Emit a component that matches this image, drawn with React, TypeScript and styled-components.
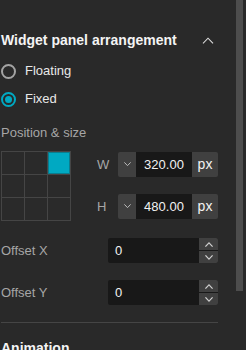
import styled, { createGlobalStyle } from "styled-components";

const GlobalStyle = createGlobalStyle`
  html, body {
    margin: 0;
    padding: 0;
    background: #292929;
  }
  * {
    box-sizing: border-box;
  }
`;

function Chevron({ up, size = 8, color = "#c8c8c8", weight = 1.4 }: { up?: boolean; size?: number; color?: string; weight?: number }) {
  return (
    <svg width={size} height={size / 2 + 1} viewBox="0 0 10 6" fill="none">
      <path
        d={up ? "M1 5.2 L5 1 L9 5.2" : "M1 0.8 L5 5 L9 0.8"}
        stroke={color}
        strokeWidth={weight}
        strokeLinecap="square"
      />
    </svg>
  );
}

const cells = [0, 1, 2, 3, 4, 5, 6, 7, 8];

function App() {
  return (
    <>
      <GlobalStyle />
      <Page>
        <Main>
          <TopRule />
          <Content>
            <Header>
              <Title>Widget panel arrangement</Title>
              <Chevron up size={12} color="#e0e0e0" weight={0.9} />
            </Header>

            <RadioList>
              <RadioRow>
                <Radio />
                <RadioLabel>Floating</RadioLabel>
              </RadioRow>
              <RadioRow>
                <Radio checked />
                <RadioLabel>Fixed</RadioLabel>
              </RadioRow>
            </RadioList>

            <SubLabel>Position &amp; size</SubLabel>

            <PositionRow>
              <AnchorGrid>
                {cells.map((i) => (
                  <Cell key={i} active={i === 2} />
                ))}
              </AnchorGrid>
              <SizeColumn>
                <SizeRow>
                  <AxisLabel>W</AxisLabel>
                  <UnitSelect>
                    <Chevron size={7} color="#bdbdbd" />
                  </UnitSelect>
                  <SizeInput>320.00</SizeInput>
                  <UnitTag>px</UnitTag>
                </SizeRow>
                <SizeRow>
                  <AxisLabel>H</AxisLabel>
                  <UnitSelect>
                    <Chevron size={7} color="#bdbdbd" />
                  </UnitSelect>
                  <SizeInput>480.00</SizeInput>
                  <UnitTag>px</UnitTag>
                </SizeRow>
              </SizeColumn>
            </PositionRow>

            <OffsetRow>
              <SubLabel>Offset X</SubLabel>
              <NumberBox>
                <NumberValue>0</NumberValue>
                <Spinner>
                  <SpinButton>
                    <Chevron up size={8} color="#cfcfcf" />
                  </SpinButton>
                  <SpinButton>
                    <Chevron size={8} color="#cfcfcf" />
                  </SpinButton>
                </Spinner>
              </NumberBox>
            </OffsetRow>

            <OffsetRow>
              <SubLabel>Offset Y</SubLabel>
              <NumberBox>
                <NumberValue>0</NumberValue>
                <Spinner>
                  <SpinButton>
                    <Chevron up size={8} color="#cfcfcf" />
                  </SpinButton>
                  <SpinButton>
                    <Chevron size={8} color="#cfcfcf" />
                  </SpinButton>
                </Spinner>
              </NumberBox>
            </OffsetRow>

            <SectionRule />
            <Title>Animation</Title>
          </Content>
        </Main>
        <ScrollTrack>
          <ScrollThumb />
        </ScrollTrack>
      </Page>
    </>
  );
}

export default App;

const Page = styled.div`
  width: 246px;
  height: 350px;
  display: flex;
  overflow: hidden;
  background: #292929;
  font-family: "Liberation Sans", Arial, sans-serif;
  font-size: 13px;
  color: #e6e6e6;
`;

const Main = styled.div`
  flex: 1;
  display: flex;
  flex-direction: column;
`;

const TopRule = styled.div`
  margin-top: 11px;
  height: 1px;
  background: #5f5f5f;
`;

const Content = styled.div`
  display: flex;
  flex-direction: column;
  padding: 0 17px 0 1px;
`;

const Header = styled.div`
  margin-top: 19px;
  height: 20px;
  display: flex;
  align-items: center;
  justify-content: space-between;
  padding-right: 4px;
`;

const Title = styled.div`
  font-size: 14px;
  font-weight: 700;
  color: #f4f4f4;
  line-height: 20px;
`;

const RadioList = styled.div`
  margin-top: 7px;
  display: flex;
  flex-direction: column;
`;

const RadioRow = styled.div`
  height: 28px;
  display: flex;
  align-items: center;
  gap: 9px;
`;

const Radio = styled.span<{ checked?: boolean }>`
  width: 15px;
  height: 15px;
  border-radius: 50%;
  border: 2px solid ${(p) => (p.checked ? "#00a9c2" : "#a3a3a3")};
  display: flex;
  align-items: center;
  justify-content: center;
  &::after {
    content: "";
    width: 7px;
    height: 7px;
    border-radius: 50%;
    background: ${(p) => (p.checked ? "#00a9c2" : "transparent")};
  }
`;

const RadioLabel = styled.span`
  color: #e8e8e8;
  line-height: 18px;
`;

const SubLabel = styled.div`
  margin-top: 11px;
  color: #a6a6a6;
  line-height: 18px;
`;

const PositionRow = styled.div`
  margin-top: 10px;
  display: flex;
  justify-content: space-between;
`;

const AnchorGrid = styled.div`
  display: grid;
  grid-template-columns: repeat(3, 22px);
  grid-template-rows: repeat(3, 22px);
  gap: 1px;
  padding: 1px;
  background: #454545;
  width: 70px;
  height: 70px;
  margin-top: -1px;
`;

const Cell = styled.div<{ active?: boolean }>`
  background: ${(p) => (p.active ? "#00a9c2" : "#2a2a2a")};
  box-shadow: ${(p) => (p.active ? "inset 0 0 0 1px #0a7d8e" : "none")};
`;

const SizeColumn = styled.div`
  display: flex;
  flex-direction: column;
  gap: 17px;
`;

const SizeRow = styled.div`
  height: 25px;
  display: flex;
  align-items: stretch;
`;

const AxisLabel = styled.span`
  width: 21px;
  display: flex;
  align-items: center;
  color: #a6a6a6;
`;

const UnitSelect = styled.div`
  width: 18px;
  background: #404040;
  border-radius: 2px 0 0 2px;
  display: flex;
  align-items: center;
  justify-content: center;
`;

const SizeInput = styled.div`
  width: 56px;
  background: #181818;
  color: #f2f2f2;
  display: flex;
  align-items: center;
  justify-content: center;
`;

const UnitTag = styled.div`
  width: 26px;
  background: #404040;
  border-radius: 0 2px 2px 0;
  color: #f2f2f2;
  font-size: 14px;
  display: flex;
  align-items: center;
  justify-content: center;
  padding-bottom: 1px;
`;

const OffsetRow = styled.div`
  margin-top: 17px;
  height: 25px;
  display: flex;
  align-items: center;
  justify-content: space-between;

  > ${SubLabel} {
    margin-top: 0;
  }
`;

const NumberBox = styled.div`
  width: 110px;
  height: 25px;
  display: flex;
  background: #181818;
  border-radius: 2px;
  overflow: hidden;
`;

const NumberValue = styled.div`
  flex: 1;
  display: flex;
  align-items: center;
  padding-left: 7px;
  color: #f2f2f2;
`;

const Spinner = styled.div`
  width: 19px;
  display: flex;
  flex-direction: column;
  gap: 1px;
`;

const SpinButton = styled.div`
  flex: 1;
  background: #404040;
  display: flex;
  align-items: center;
  justify-content: center;
`;

const SectionRule = styled.div`
  margin-top: 17px;
  height: 1px;
  background: #454545;
  margin-bottom: 15px;
`;

const ScrollTrack = styled.div`
  width: 11px;
  padding-left: 1px;
`;

const ScrollThumb = styled.div`
  width: 7px;
  height: 291px;
  background: #4d4d4d;
`;
